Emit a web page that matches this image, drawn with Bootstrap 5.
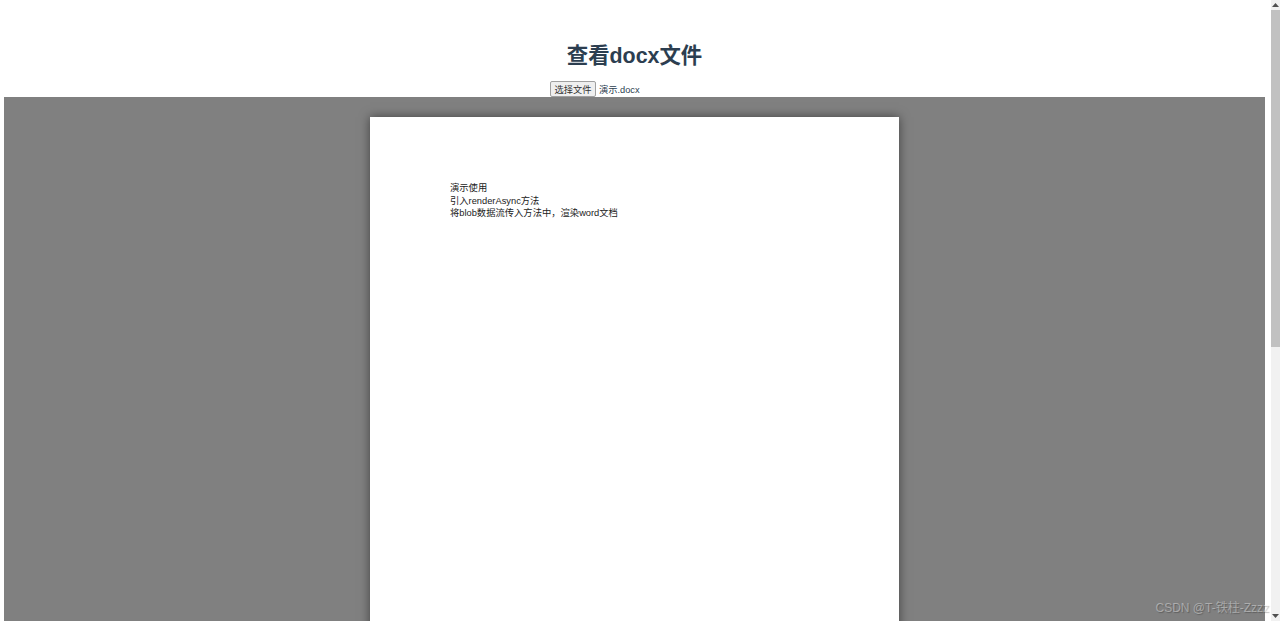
<!DOCTYPE html>
<html lang="zh">
<head>
<meta charset="utf-8">
<title>查看docx文件</title>
<link rel="stylesheet" href="https://cdn.jsdelivr.net/npm/bootstrap@5.3.0/dist/css/bootstrap.min.css">
<style>
html,body{height:621px;overflow:hidden;background:#fff}
body{font-family:"Liberation Sans","Noto Sans CJK SC",sans-serif;color:#2c3e50;position:relative}
.shell{height:621px}
.app-col{width:1265px;padding-left:4px}
.app-title{font-size:21.4px;font-weight:700;line-height:24px;margin:0;padding-top:44px;height:81px;color:#2c3e50}
.picker{height:16px;padding-left:546px;font-size:9.25px;line-height:16px;padding-top:1px}
.pick-btn{width:46px;height:16px;margin-top:-1px;padding:2px 0 0;font-size:9.25px;line-height:12px;color:#333;background:#efefef;border:1px solid #a0a0a0;border-radius:2px;margin-right:3px}
.viewer{height:524px;background:#808080;padding-top:20px;overflow:hidden}
.sheet{width:529px;height:600px;background:#fff;box-shadow:0 0 10px rgba(0,0,0,.5);padding:65px 80px 0;font-size:9.3px;line-height:12.6px;color:#222}
.sheet p{margin:0;white-space:nowrap}
.sbar{width:9px;margin-left:6px;background:#f1f1f1}
.sb-end{height:10px;font-size:0}
.sb-thumb{height:337px;background:#c1c1c1}
.sb-space{height:264px}
.wmark{position:absolute;right:11px;top:600px;font-size:12px;line-height:16px;color:rgba(255,255,255,.38);text-shadow:1px 1px 1px rgba(0,0,0,.25);white-space:nowrap}
</style>
</head>
<body>
<div class="shell d-flex">
  <div class="app-col">
    <h1 class="app-title text-center">查看docx文件</h1>
    <div class="picker d-flex align-items-center"><button type="button" class="pick-btn">选择文件</button><span>演示.docx</span></div>
    <div class="viewer d-flex justify-content-center">
      <div class="sheet">
        <p>演示使用</p>
        <p>引入renderAsync方法</p>
        <p>将blob数据流传入方法中，渲染word文档</p>
      </div>
    </div>
  </div>
  <div class="sbar d-flex flex-column">
    <div class="sb-end d-flex align-items-center justify-content-center"><svg width="7" height="4" viewBox="0 0 7 4"><path d="M3.5 0 7 4H0z" fill="#505050"/></svg></div>
    <div class="sb-thumb"></div>
    <div class="sb-space"></div>
    <div class="sb-end d-flex align-items-center justify-content-center"><svg width="7" height="4" viewBox="0 0 7 4"><path d="M0 0h7L3.500 4z" fill="#505050"/></svg></div>
  </div>
</div>
<div class="wmark">CSDN @T-铁柱-Zzzz</div>
<script src="https://cdn.jsdelivr.net/npm/bootstrap@5.3.0/dist/js/bootstrap.bundle.min.js"></script>
</body>
</html>
